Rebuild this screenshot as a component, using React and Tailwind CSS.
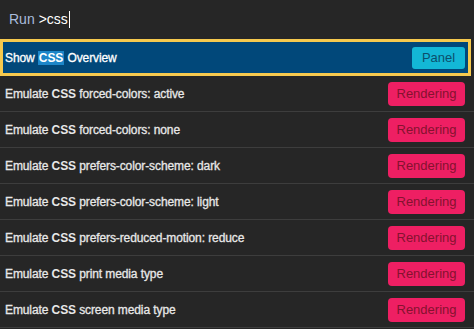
import React from "react";

const rows = [
  "forced-colors: active",
  "forced-colors: none",
  "prefers-color-scheme: dark",
  "prefers-color-scheme: light",
  "prefers-reduced-motion: reduce",
  "print media type",
  "screen media type",
];

export default function App() {
  return (
    <div
      className="w-[474px] h-[329px] bg-[#262626] overflow-hidden text-[#e3e3e3]"
      style={{ fontFamily: '"Liberation Sans", Arial, sans-serif' }}
    >
      <div className="h-[39px] flex items-center pl-[9px] text-[14px]">
        <span className="text-[#a9bcdc]">Run</span>
        <span className="text-white ml-[4px]">&gt;css</span>
        <span className="inline-block w-px h-[17px] bg-white ml-px" />
      </div>
      <div className="h-[37px] w-[471px] border-[3px] border-[#f6c94e] bg-[#01487a] flex items-center pl-[2px] pr-[3px]">
        <span className="text-[12px] tracking-[-0.1px] text-white [-webkit-text-stroke:0.3px_white]">
          Show <span className="bg-[#1d86c9] font-bold px-px [-webkit-text-stroke:0]">CSS</span> Overview
        </span>
        <div className="ml-auto w-[53px] h-[22px] rounded-[3px] bg-[#13b7d6] text-[#0b4f6c] text-[13px] flex items-center justify-center">
          Panel
        </div>
      </div>
      {rows.map((r) => (
        <div
          key={r}
          className="h-[36px] flex items-center pl-[5px] pr-[9px] border-b border-[#3d3d3d]"
        >
          <span className="text-[12px] tracking-[-0.1px] text-[#e8e8e8] [-webkit-text-stroke:0.3px_#e8e8e8]">
            Emulate{" "}
            <span className="font-bold [-webkit-text-stroke:0]">CSS</span> {r}
          </span>
          <div className="ml-auto w-[77px] h-[24px] rounded-[4px] bg-[#ee1f63] text-[#85122f] text-[13px] flex items-center justify-center">
            Rendering
          </div>
        </div>
      ))}
    </div>
  );
}
